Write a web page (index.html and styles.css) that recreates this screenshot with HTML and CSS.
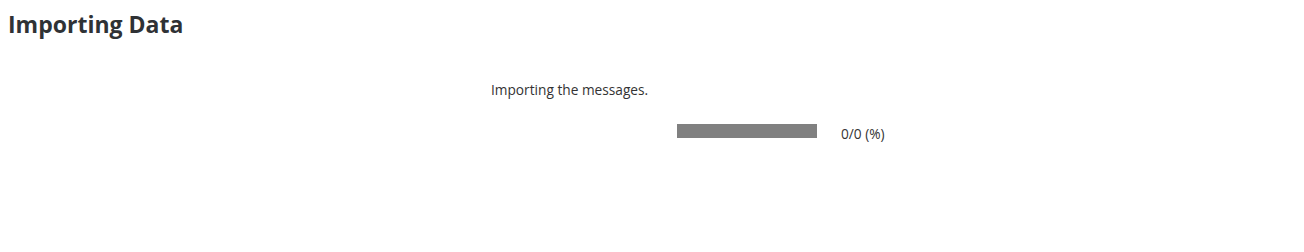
FILE: index.html
```html
<!DOCTYPE html>
<html>
<head>
<meta charset="utf-8">
<link rel="stylesheet" href="styles.css">
</head>
<body>
<h1 class="title">Importing Data</h1>
<div class="panel">
  <div class="message">Importing the messages.</div>
  <div class="progress-row">
    <div class="bar"></div>
    <div class="count">0/0 (%)</div>
  </div>
</div>
</body>
</html>
```
FILE: styles.css
```css
html, body {
  margin: 0;
  padding: 0;
  background: #ffffff;
}
body {
  padding: 8px;
  font-family: "Open Sans", "Noto Sans", sans-serif;
  color: #333333;
}
.title {
  margin: 0;
  font-size: 23px;
  line-height: 32px;
  font-weight: 700;
  color: #2f3235;
}
.panel {
  margin-top: 40px;
  margin-left: 483px;
  display: flex;
  flex-direction: column;
}
.message {
  font-size: 13.7px;
  line-height: 20px;
}
.progress-row {
  display: flex;
  align-items: flex-start;
  margin-top: 24px;
  padding-left: 186px;
  gap: 24px;
}
.bar {
  width: 140px;
  height: 14px;
  background: #808080;
}
.count {
  font-size: 13.7px;
  line-height: 20px;
}
```
